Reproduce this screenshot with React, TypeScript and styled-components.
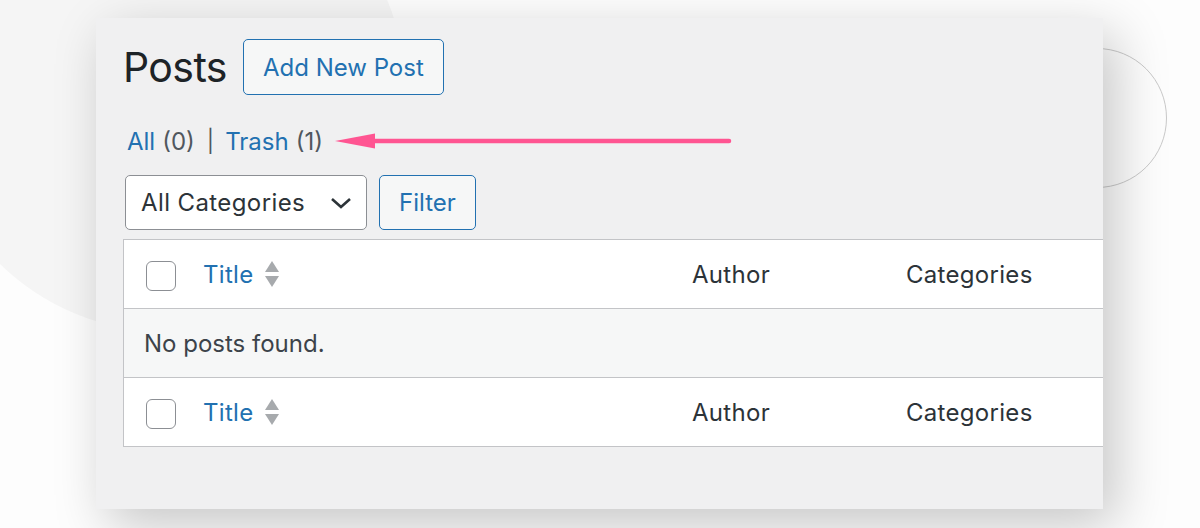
import styled, { createGlobalStyle } from "styled-components";

const GlobalStyle = createGlobalStyle`
  body {
    margin: 0;
    background: #fdfdfd;
    font-family: Inter, "Noto Sans", "Liberation Sans", sans-serif;
  }
`;

const blue = "#2271b1";

export default function App() {
  return (
    <Page>
      <GlobalStyle />
      <BigBlob />
      <Ring />
      <Panel>
        <Heading>
          <H1>Posts</H1>
          <OutlineButton>Add New Post</OutlineButton>
        </Heading>
        <Views>
          <ViewLink href="#">All</ViewLink>
          <Count>(0)</Count>
          <Sep>|</Sep>
          <ViewLink href="#">Trash</ViewLink>
          <Count>(1)</Count>
          <Arrow width="400" height="20" viewBox="0 0 400 20">
            <path d="M0 10 L40 2.5 L40 17.5 Z" fill="#ff5592" />
            <line x1="38" y1="10" x2="394" y2="10" stroke="#ff5592" strokeWidth="4.5" strokeLinecap="round" />
          </Arrow>
        </Views>
        <Filters>
          <Select>
            All Categories
            <svg width="22" height="14" viewBox="0 0 22 14">
              <polyline points="2,3 11,11 20,3" fill="none" stroke="#2c3338" strokeWidth="2.6" />
            </svg>
          </Select>
          <OutlineButton $small>Filter</OutlineButton>
        </Filters>
        <Table>
          <HeadRow />
          <Row $muted>
            <Empty>No posts found.</Empty>
          </Row>
          <HeadRow />
        </Table>
      </Panel>
    </Page>
  );
}

function HeadRow() {
  return (
    <Row>
      <CheckCell>
        <Checkbox />
      </CheckCell>
      <Cell>
        <SortLink href="#">Title</SortLink>
        <SortIcon width="18" height="30" viewBox="0 0 18 30">
          <path d="M9 2 L16 13 L2 13 Z" fill="#a7aaad" />
          <path d="M2 17 L16 17 L9 28 Z" fill="#a7aaad" />
        </SortIcon>
      </Cell>
      <Cell>Author</Cell>
      <Cell>Categories</Cell>
    </Row>
  );
}

const Page = styled.div`
  position: relative;
  width: 1200px;
  height: 528px;
  overflow: hidden;
  padding: 18px 0 0 96px;
  box-sizing: border-box;
`;

const BigBlob = styled.div`
  position: absolute;
  left: -72px;
  top: -146px;
  width: 478px;
  height: 478px;
  border-radius: 50%;
  background: #f5f5f5;
`;

const Ring = styled.div`
  position: absolute;
  left: 1027px;
  top: 48px;
  width: 140px;
  height: 140px;
  border-radius: 50%;
  border: 1px solid #c9c9c9;
  box-sizing: border-box;
`;

const Panel = styled.div`
  position: relative;
  z-index: 1;
  width: 1007px;
  height: 491px;
  background: #f0f0f1;
  box-shadow: 12px 16px 50px rgba(0, 0, 0, 0.22);
  overflow: hidden;
  padding: 21px 0 0 27px;
  box-sizing: border-box;
`;

const Heading = styled.div`
  display: flex;
  align-items: center;
  gap: 16px;
  height: 56px;
`;

const H1 = styled.h1`
  margin: 0;
  font-size: 41px;
  font-weight: 400;
  color: #1d2327;
  letter-spacing: -0.6px;
`;

const OutlineButton = styled.button<{ $small?: boolean }>`
  height: ${(p) => (p.$small ? "55px" : "56px")};
  width: ${(p) => (p.$small ? "97px" : "201px")};
  border: 1.5px solid ${blue};
  border-radius: 5px;
  background: #f6f7f7;
  color: ${blue};
  font-family: inherit;
  font-size: 24px;
  padding: 0;
`;

const Views = styled.div`
  display: flex;
  align-items: center;
  margin: 31px 0 0 4px;
  height: 30px;
  font-size: 24px;
  color: #50575e;
`;

const ViewLink = styled.a`
  color: ${blue};
  text-decoration: none;
  margin-right: 7px;
`;

const Count = styled.span``;

const Sep = styled.span`
  margin: 0 11px 0 12px;
  font-size: 22px;
`;

const Arrow = styled.svg`
  margin-left: 12px;
`;

const Filters = styled.div`
  display: flex;
  gap: 12px;
  margin: 19px 0 0 2px;
`;

const Select = styled.div`
  width: 242px;
  height: 55px;
  box-sizing: border-box;
  border: 1.5px solid #8c8f94;
  border-radius: 5px;
  background: #fff;
  display: flex;
  align-items: center;
  justify-content: space-between;
  padding: 0 14px 0 15px;
  font-size: 24px;
  letter-spacing: 0.4px;
  color: #2c3338;
`;

const Table = styled.div`
  margin-top: 9px;
  width: 1100px;
  border: 1px solid #c3c4c7;
  background: #fff;
`;

const Row = styled.div<{ $muted?: boolean }>`
  display: grid;
  grid-template-columns: 67px 489px 214px 1fr;
  align-items: center;
  height: 68px;
  background: ${(p) => (p.$muted ? "#f6f7f7" : "#fff")};
  border-bottom: 1px solid #c3c4c7;
  font-size: 24px;
  letter-spacing: 0.3px;
  color: #2c3338;
  &:last-child {
    border-bottom: none;
  }
`;

const Cell = styled.div`
  display: flex;
  align-items: center;
  padding-left: 12px;
`;

const CheckCell = styled.div`
  padding: 4px 0 0 22px;
`;

const Checkbox = styled.div`
  width: 30px;
  height: 30px;
  box-sizing: border-box;
  border: 1.5px solid #8c8f94;
  border-radius: 6px;
  background: #fff;
`;

const SortLink = styled.a`
  color: ${blue};
  text-decoration: none;
`;

const SortIcon = styled.svg`
  margin-left: 10px;
`;

const Empty = styled.div`
  grid-column: 1 / -1;
  padding-left: 20px;
  color: #3c434a;
  letter-spacing: 0;
`;
